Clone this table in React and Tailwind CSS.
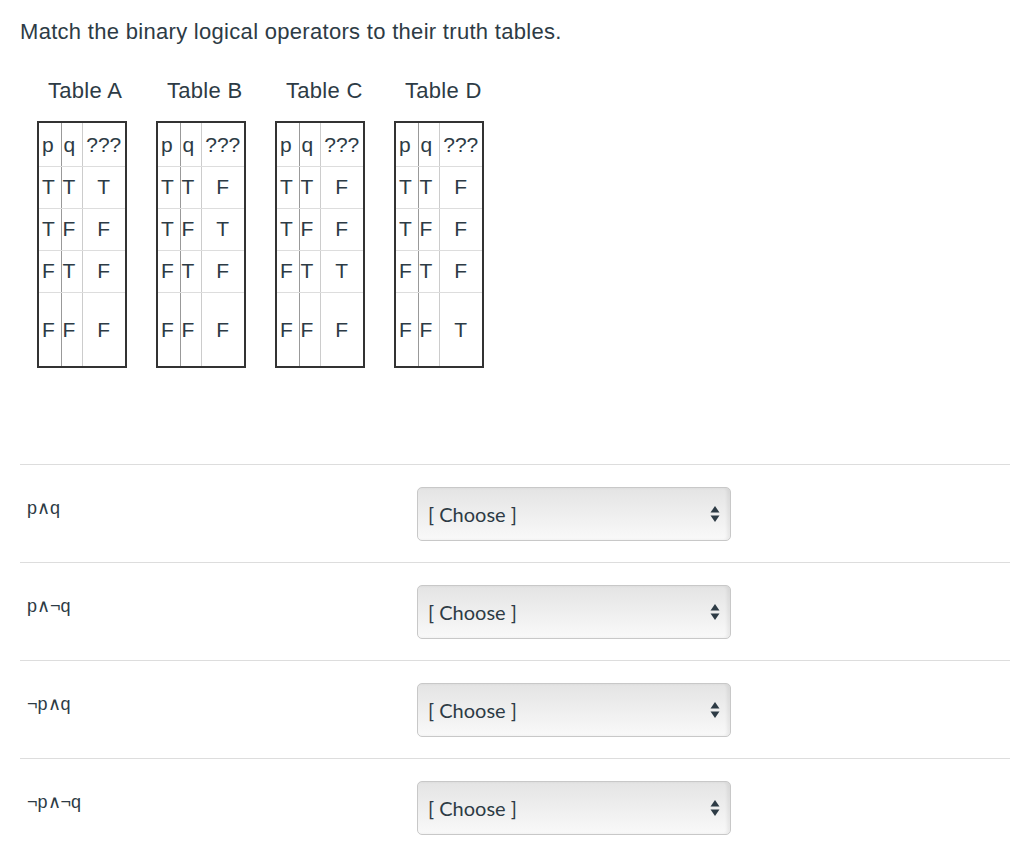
import React from "react";

const tables = [
  { name: "Table A", values: ["T", "F", "F", "F"] },
  { name: "Table B", values: ["F", "T", "F", "F"] },
  { name: "Table C", values: ["F", "F", "T", "F"] },
  { name: "Table D", values: ["F", "F", "F", "T"] },
];

const inputs = [
  ["T", "T"],
  ["T", "F"],
  ["F", "T"],
  ["F", "F"],
];

const operators = ["p∧q", "p∧¬q", "¬p∧q", "¬p∧¬q"];

function SortArrows() {
  return (
    <svg width="10" height="18" viewBox="0 0 10 18" className="shrink-0">
      <path d="M5 1 L9.5 7.5 L0.5 7.5 Z" fill="#2d3b45" />
      <path d="M5 17 L9.5 10.5 L0.5 10.5 Z" fill="#2d3b45" />
    </svg>
  );
}

function TruthTable({ values }) {
  return (
    <table className="border-collapse border-2 border-[#333] text-[21px] text-[#2d3b45]">
      <tbody>
        <tr className="h-[44px]">
          <td className="w-[23px] pl-[3px] border-r border-[#999] border-b border-b-[#ddd]">p</td>
          <td className="w-[21px] pl-[2px] border-r border-[#ccc] border-b border-b-[#ddd]">q</td>
          <td className="w-[44px] text-center border-b border-[#ddd]">???</td>
        </tr>
        {inputs.map((row, i) => (
          <tr key={i} className={i === 3 ? "h-[75px]" : "h-[42px]"}>
            <td className={"pl-[3px] border-r border-[#999]" + (i < 3 ? " border-b border-b-[#ddd]" : "")}>{row[0]}</td>
            <td className={"pl-[1px] border-r border-[#ccc]" + (i < 3 ? " border-b border-b-[#ddd]" : "")}>{row[1]}</td>
            <td className={"text-center" + (i < 3 ? " border-b border-[#ddd]" : "")}>{values[i]}</td>
          </tr>
        ))}
      </tbody>
    </table>
  );
}

export default function App() {
  return (
    <div className="bg-white min-h-screen px-5 pt-[17px] text-[#2d3b45]" style={{ fontFamily: '"Liberation Sans", Arial, sans-serif' }}>
      <p className="text-[22px] leading-[30px] tracking-[0.3px]">Match the binary logical operators to their truth tables.</p>

      <div className="flex pl-[17px] mt-[29px]">
        {tables.map((t) => (
          <div key={t.name} className="w-[119px] shrink-0">
            <div className="pl-[11px] text-[22px] leading-[30px] tracking-[0.3px] mb-[15px]">{t.name}</div>
            <TruthTable values={t.values} />
          </div>
        ))}
      </div>

      <div className="mt-[96px] mr-[-6px]">
        {operators.map((op) => (
          <div key={op} className="flex items-start h-[98px] border-t border-[#ddd]">
            <div className="w-[397px] pl-[7px] pt-[31px] text-[18px] leading-[24px]">{op}</div>
            <div className="mt-[22px] w-[314px] h-[54px] rounded-[5px] border border-[#c8c8c8] bg-gradient-to-b from-[#e4e4e4] to-[#f9f9f9] shadow-[inset_-3px_0_3px_rgba(0,0,0,0.06)] flex items-center justify-between pl-[10px] pr-[10px]">
              <span className="text-[20px] text-[#2d3b45]" style={{ fontFamily: 'Lato, "Open Sans", sans-serif' }}>[ Choose ]</span>
              <SortArrows />
            </div>
          </div>
        ))}
      </div>
    </div>
  );
}
